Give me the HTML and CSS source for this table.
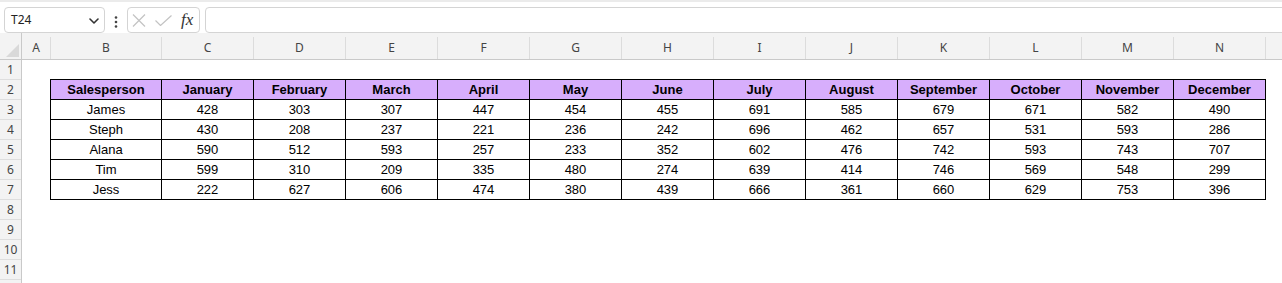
FILE: index.html
```html
<!DOCTYPE html>
<html lang="en">
<head>
<meta charset="utf-8">
<title>Sales by month</title>
<link rel="stylesheet" href="styles.css">
</head>
<body>
<div class="app">
  <div class="topband"></div>
  <div class="fbar">
    <div class="namebox">
      <span class="ref">T24</span>
      <svg class="chev" width="10" height="6" viewBox="0 0 10 6"><path d="M1 1 L5 5 L9 1" fill="none" stroke="#333" stroke-width="1.6" stroke-linecap="round" stroke-linejoin="round"/></svg>
    </div>
    <svg class="dots" width="4" height="12" viewBox="0 0 4 12"><circle cx="2" cy="1.5" r="1.3" fill="#444"/><circle cx="2" cy="6" r="1.3" fill="#444"/><circle cx="2" cy="10.5" r="1.3" fill="#444"/></svg>
    <div class="fxbox">
      <svg class="xicon" width="14" height="13" viewBox="0 0 14 13"><path d="M1 0.5 L13 12.5 M13 0.5 L1 12.5" stroke="#c3c3c3" stroke-width="1.2" fill="none"/></svg>
      <svg class="check" width="17" height="11" viewBox="0 0 17 11"><path d="M0.5 5.5 L5.5 10.5 L16.5 0.5" stroke="#c3c3c3" stroke-width="1.2" fill="none"/></svg>
      <span class="fx">fx</span>
    </div>
    <div class="input"></div>
  </div>
  <div class="colhead">
    <div class="corner"><svg width="13" height="13" viewBox="0 0 13 13"><path d="M13 0 L13 13 L0 13 Z" fill="#d9d9d9"/></svg></div>
    <div class="ch ca">A</div>
    <div class="ch cb">B</div>
    <div class="ch">C</div>
    <div class="ch">D</div>
    <div class="ch">E</div>
    <div class="ch">F</div>
    <div class="ch">G</div>
    <div class="ch">H</div>
    <div class="ch">I</div>
    <div class="ch">J</div>
    <div class="ch">K</div>
    <div class="ch">L</div>
    <div class="ch">M</div>
    <div class="ch">N</div>
    <div class="ch rest"></div>
  </div>
  <div class="sheet">
    <div class="rowhead">
      <div class="rh">1</div><div class="rh">2</div><div class="rh">3</div><div class="rh">4</div>
      <div class="rh">5</div><div class="rh">6</div><div class="rh">7</div><div class="rh">8</div>
      <div class="rh">9</div><div class="rh">10</div><div class="rh">11</div><div class="rh"></div>
    </div>
    <div class="canvas">
      <table class="data">
        <thead>
          <tr><th class="first">Salesperson</th><th>January</th><th>February</th><th>March</th><th>April</th><th>May</th><th>June</th><th>July</th><th>August</th><th>September</th><th>October</th><th>November</th><th>December</th></tr>
        </thead>
        <tbody>
          <tr><td>James</td><td>428</td><td>303</td><td>307</td><td>447</td><td>454</td><td>455</td><td>691</td><td>585</td><td>679</td><td>671</td><td>582</td><td>490</td></tr>
          <tr><td>Steph</td><td>430</td><td>208</td><td>237</td><td>221</td><td>236</td><td>242</td><td>696</td><td>462</td><td>657</td><td>531</td><td>593</td><td>286</td></tr>
          <tr><td>Alana</td><td>590</td><td>512</td><td>593</td><td>257</td><td>233</td><td>352</td><td>602</td><td>476</td><td>742</td><td>593</td><td>743</td><td>707</td></tr>
          <tr><td>Tim</td><td>599</td><td>310</td><td>209</td><td>335</td><td>480</td><td>274</td><td>639</td><td>414</td><td>746</td><td>569</td><td>548</td><td>299</td></tr>
          <tr><td>Jess</td><td>222</td><td>627</td><td>606</td><td>474</td><td>380</td><td>439</td><td>666</td><td>361</td><td>660</td><td>629</td><td>753</td><td>396</td></tr>
        </tbody>
      </table>
    </div>
  </div>
</div>
</body>
</html>
```
FILE: styles.css
```css
html, body {
  margin: 0;
  padding: 0;
  background: #ffffff;
  overflow: hidden;
}
.app {
  width: 1282px;
  height: 283px;
  overflow: hidden;
  font-family: "Noto Sans", "DejaVu Sans", sans-serif;
}
.topband {
  height: 2px;
  background: #ebebeb;
}
.fbar {
  height: 31px;
  box-sizing: border-box;
  padding-top: 5px;
  display: flex;
  align-items: flex-start;
  background: #ffffff;
}
.namebox {
  flex: 0 0 auto;
  margin-left: 4px;
  width: 101px;
  height: 26px;
  box-sizing: border-box;
  border: 1px solid #d4d4d4;
  border-radius: 4px;
  display: flex;
  align-items: center;
  justify-content: space-between;
  padding: 0 5px 0 6px;
  background: #fff;
}
.ref {
  font-size: 12px;
  color: #222;
  line-height: 1;
}
.chev {
  display: block;
  margin-top: 1px;
}
.dots {
  flex: 0 0 auto;
  display: block;
  margin: 9px 0 0 9px;
}
.fxbox {
  flex: 0 0 auto;
  margin-left: 9px;
  width: 73px;
  height: 26px;
  box-sizing: border-box;
  border: 1px solid #d4d4d4;
  border-radius: 4px;
  display: flex;
  align-items: center;
  padding-left: 4px;
  background: #fff;
}
.xicon {
  display: block;
  margin-top: 1px;
}
.check {
  display: block;
  margin-left: 9px;
  margin-top: 1px;
}
.fx {
  margin-left: 9px;
  font-family: "Liberation Serif", "DejaVu Serif", serif;
  font-style: italic;
  font-size: 17px;
  color: #333;
  line-height: 1;
  margin-top: -2px;
}
.input {
  margin-left: 5px;
  flex: 1 0 auto;
  margin-right: -10px;
  height: 26px;
  box-sizing: border-box;
  border: 1px solid #d4d4d4;
  border-radius: 4px;
  background: #fff;
}
.colhead {
  height: 27px;
  box-sizing: border-box;
  background: #f3f3f3;
  border-bottom: 1px solid #c9c9c9;
  display: flex;
  padding-top: 4px;
}
.corner {
  flex: 0 0 22px;
  width: 22px;
  box-sizing: border-box;
  border-right: 1px solid #c9c9c9;
  display: flex;
  align-items: flex-end;
  justify-content: flex-end;
  padding: 0 2px 2px 0;
  margin-top: -4px;
}
.corner svg { display: block; }
.ch {
  flex: 0 0 92px;
  box-sizing: border-box;
  border-right: 1px solid #dcdcdc;
  font-size: 12px;
  color: #444;
  display: flex;
  align-items: center;
  justify-content: center;
  padding-bottom: 1px;
}
.ch.ca { flex-basis: 29px; }
.ch.cb { flex-basis: 111px; }
.ch.rest { flex: 1 1 auto; border-right: none; }
.sheet {
  display: flex;
}
.rowhead {
  width: 22px;
  flex: 0 0 22px;
  box-sizing: border-box;
  background: #f3f3f3;
  border-right: 1px solid #c9c9c9;
}
.rh {
  height: 20px;
  box-sizing: border-box;
  border-bottom: 1px solid #dedede;
  font-size: 12px;
  color: #444;
  display: flex;
  align-items: center;
  justify-content: center;
}
.canvas {
  flex: 0 0 auto;
  padding: 19px 0 0 28px;
}
.data {
  border-collapse: separate;
  border-spacing: 0;
  table-layout: fixed;
  width: 1216px;
  border-left: 1px solid #000;
  border-top: 1px solid #000;
  font-family: "Liberation Sans", Arial, sans-serif;
  font-size: 13px;
  color: #000;
}
.data th, .data td {
  box-sizing: border-box;
  width: 92px;
  height: 20px;
  padding: 0;
  border-right: 1px solid #000;
  border-bottom: 1px solid #000;
  text-align: center;
  vertical-align: middle;
  line-height: 19px;
  white-space: nowrap;
}
.data th.first { width: 111px; }
.data th {
  background: #d7aefc;
  font-weight: bold;
}
```
